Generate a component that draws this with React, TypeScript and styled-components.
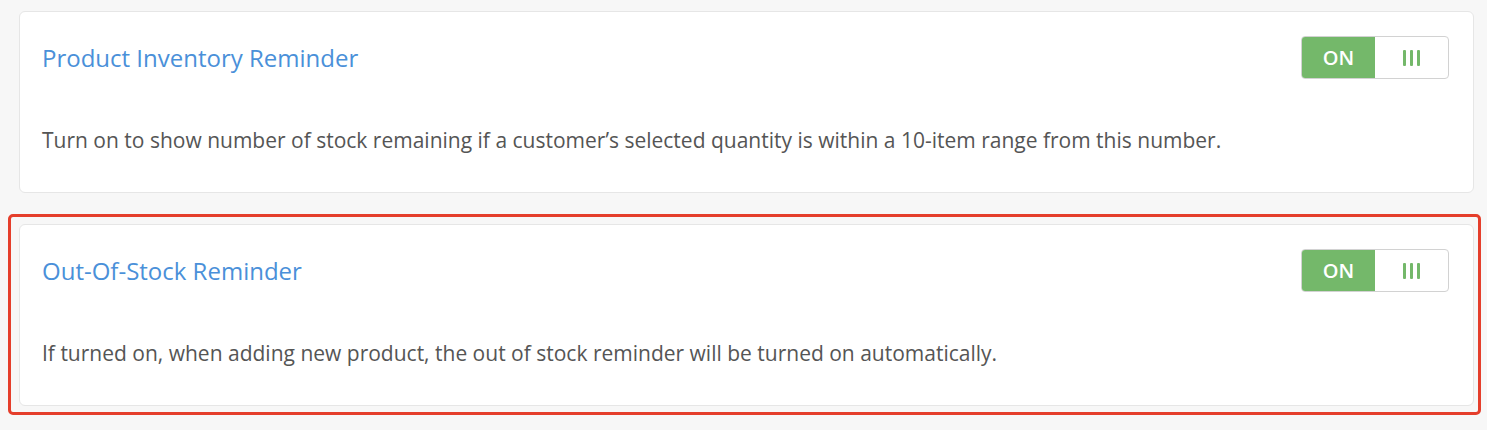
import React from "react";
import styled, { createGlobalStyle } from "styled-components";

const GlobalStyle = createGlobalStyle`
  html, body {
    margin: 0;
    padding: 0;
    background: #f7f7f7;
    font-family: "Open Sans", "Noto Sans", Arial, sans-serif;
  }
`;

const Page = styled.div`
  display: flex;
  flex-direction: column;
  gap: 12px;
  padding: 1px 6px 15px 8px;
`;

const Highlight = styled.div<{ $active?: boolean }>`
  border: 3px solid ${(p) => (p.$active ? "#e53e2b" : "transparent")};
  border-radius: 5px;
  padding: 7px 4px 6px 8px;
`;

const Card = styled.section`
  background: #fff;
  border: 1px solid #e6e6e6;
  border-radius: 6px;
  padding: 24px 24px 37px 22px;
  height: 182px;
  box-sizing: border-box;
`;

const Header = styled.div`
  display: flex;
  align-items: center;
  justify-content: space-between;
`;

const Title = styled.h2`
  margin: 0;
  font-size: 24px;
  line-height: 32px;
  font-weight: 400;
  color: #4a90d9;
`;

const Description = styled.p`
  margin: 47px 0 0;
  font-size: 21px;
  line-height: 29px;
  color: #555;
`;

const Toggle = styled.div`
  display: flex;
  width: 148px;
  height: 43px;
  box-sizing: border-box;
  border: 1px solid #d2d2d2;
  border-radius: 4px;
  overflow: hidden;
  background: #fff;
`;

const OnPart = styled.div`
  width: 73px;
  display: flex;
  align-items: center;
  justify-content: center;
  background: #74b86a;
  color: #fff;
  font-size: 20px;
  font-weight: 600;
`;

const OffPart = styled.div`
  flex: 1;
  display: flex;
  align-items: center;
  justify-content: center;
  gap: 4px;
`;

const Bar = styled.span`
  width: 3px;
  height: 16px;
  background: #74b86a;
  border-radius: 1px;
`;

type Setting = { title: string; text: string; highlighted?: boolean };

const settings: Setting[] = [
  {
    title: "Product Inventory Reminder",
    text: "Turn on to show number of stock remaining if a customer\u2019s selected quantity is within a 10-item range from this number.",
  },
  {
    title: "Out-Of-Stock Reminder",
    text: "If turned on, when adding new product, the out of stock reminder will be turned on automatically.",
    highlighted: true,
  },
];

export default function App() {
  return (
    <>
      <GlobalStyle />
      <Page>
        {settings.map((s) => (
          <Highlight key={s.title} $active={s.highlighted}>
            <Card>
              <Header>
                <Title>{s.title}</Title>
                <Toggle>
                  <OnPart>ON</OnPart>
                  <OffPart>
                    <Bar />
                    <Bar />
                    <Bar />
                  </OffPart>
                </Toggle>
              </Header>
              <Description>{s.text}</Description>
            </Card>
          </Highlight>
        ))}
      </Page>
    </>
  );
}
